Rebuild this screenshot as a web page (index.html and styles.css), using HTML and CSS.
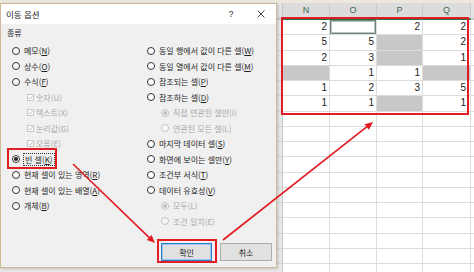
FILE: index.html
```html
<!DOCTYPE html>
<html lang="ko">
<head>
<meta charset="utf-8">
<title>이동 옵션</title>
<link rel="stylesheet" href="styles.css">
</head>
<body>
<div class="stage">
  <div class="sheet">
    <div class="topstrip"></div>
    <div class="hdr">
      <div class="rh"></div>
      <div class="ch">N</div><div class="ch">O</div><div class="ch w46">P</div><div class="ch wq">Q</div><div class="ch last"></div>
    </div>
    <div class="row"><div class="rh"></div><div class="c">2</div><div class="c active"></div><div class="c w46">2</div><div class="c wq">2</div><div class="c last"></div></div>
    <div class="row"><div class="rh"></div><div class="c">5</div><div class="c">5</div><div class="c w46 blank"></div><div class="c wq">2</div><div class="c last"></div></div>
    <div class="row"><div class="rh"></div><div class="c">2</div><div class="c">3</div><div class="c w46 blank"></div><div class="c wq">1</div><div class="c last"></div></div>
    <div class="row"><div class="rh"></div><div class="c blank"></div><div class="c">1</div><div class="c w46">1</div><div class="c wq blank"></div><div class="c last"></div></div>
    <div class="row"><div class="rh"></div><div class="c">1</div><div class="c">2</div><div class="c w46">3</div><div class="c wq">5</div><div class="c last"></div></div>
    <div class="row"><div class="rh"></div><div class="c">1</div><div class="c">1</div><div class="c w46 blank"></div><div class="c wq">1</div><div class="c last"></div></div>
    <div class="row"><div class="rh"></div><div class="c"></div><div class="c"></div><div class="c w46"></div><div class="c wq"></div><div class="c last"></div></div>
    <div class="row"><div class="rh"></div><div class="c"></div><div class="c"></div><div class="c w46"></div><div class="c wq"></div><div class="c last"></div></div>
    <div class="row"><div class="rh"></div><div class="c"></div><div class="c"></div><div class="c w46"></div><div class="c wq"></div><div class="c last"></div></div>
    <div class="row"><div class="rh"></div><div class="c"></div><div class="c"></div><div class="c w46"></div><div class="c wq"></div><div class="c last"></div></div>
    <div class="row"><div class="rh"></div><div class="c"></div><div class="c"></div><div class="c w46"></div><div class="c wq"></div><div class="c last"></div></div>
    <div class="row"><div class="rh"></div><div class="c"></div><div class="c"></div><div class="c w46"></div><div class="c wq"></div><div class="c last"></div></div>
    <div class="row"><div class="rh"></div><div class="c"></div><div class="c"></div><div class="c w46"></div><div class="c wq"></div><div class="c last"></div></div>
    <div class="row"><div class="rh"></div><div class="c"></div><div class="c"></div><div class="c w46"></div><div class="c wq"></div><div class="c last"></div></div>
    <div class="row"><div class="rh"></div><div class="c"></div><div class="c"></div><div class="c w46"></div><div class="c wq"></div><div class="c last"></div></div>
    <div class="row"><div class="rh"></div><div class="c"></div><div class="c"></div><div class="c w46"></div><div class="c wq"></div><div class="c last"></div></div>
    <div class="row"><div class="rh"></div><div class="c"></div><div class="c"></div><div class="c w46"></div><div class="c wq"></div><div class="c last"></div></div>
  </div>

  <div class="dialog">
    <div class="titlebar">
      <span class="title">이동 옵션</span>
      <span class="help">?</span>
      <svg class="close" width="8" height="8" viewBox="0 0 8 8"><path d="M0.5 0.5L7.5 7.5M7.5 0.5L0.5 7.5" stroke="#333" stroke-width="0.9" fill="none"/></svg>
    </div>
    <div class="body">
      <div class="group-label">종류</div>
      <div class="opts">
        <div class="col left">
          <div class="opt"><span class="radio"></span><span>메모(<u>N</u>)</span></div>
          <div class="opt"><span class="radio"></span><span>상수(<u>O</u>)</span></div>
          <div class="opt"><span class="radio"></span><span>수식(<u>F</u>)</span></div>
          <div class="opt sub dis"><span class="check"><svg width="5" height="5" viewBox="0 0 5 5"><path d="M0.4 2.6L1.9 4.1L4.6 0.8" stroke="#b8b8b8" stroke-width="0.9" fill="none"/></svg></span><span>숫자(U)</span></div>
          <div class="opt sub dis"><span class="check"><svg width="5" height="5" viewBox="0 0 5 5"><path d="M0.4 2.6L1.9 4.1L4.6 0.8" stroke="#b8b8b8" stroke-width="0.9" fill="none"/></svg></span><span>텍스트(X)</span></div>
          <div class="opt sub dis"><span class="check"><svg width="5" height="5" viewBox="0 0 5 5"><path d="M0.4 2.6L1.9 4.1L4.6 0.8" stroke="#b8b8b8" stroke-width="0.9" fill="none"/></svg></span><span>논리값(G)</span></div>
          <div class="opt sub dis"><span class="check"><svg width="5" height="5" viewBox="0 0 5 5"><path d="M0.4 2.6L1.9 4.1L4.6 0.8" stroke="#b8b8b8" stroke-width="0.9" fill="none"/></svg></span><span>오류(E)</span></div>
          <div class="opt"><span class="radio on"></span><span class="focus">빈 셀(<u>K</u>)</span></div>
          <div class="opt"><span class="radio"></span><span>현재 셀이 있는 영역(<u>R</u>)</span></div>
          <div class="opt"><span class="radio"></span><span>현재 셀이 있는 배열(<u>A</u>)</span></div>
          <div class="opt"><span class="radio"></span><span>개체(<u>B</u>)</span></div>
        </div>
        <div class="col right">
          <div class="opt"><span class="radio"></span><span>동일 행에서 값이 다른 셀(<u>W</u>)</span></div>
          <div class="opt"><span class="radio"></span><span>동일 열에서 값이 다른 셀(<u>M</u>)</span></div>
          <div class="opt"><span class="radio"></span><span>참조되는 셀(<u>P</u>)</span></div>
          <div class="opt"><span class="radio"></span><span>참조하는 셀(<u>D</u>)</span></div>
          <div class="opt sub dis"><span class="radio on"></span><span>직접 연관된 셀만(I)</span></div>
          <div class="opt sub dis"><span class="radio"></span><span>연관된 모든 셀(L)</span></div>
          <div class="opt"><span class="radio"></span><span>마지막 데이터 셀(<u>S</u>)</span></div>
          <div class="opt"><span class="radio"></span><span>화면에 보이는 셀만(<u>Y</u>)</span></div>
          <div class="opt"><span class="radio"></span><span>조건부 서식(<u>T</u>)</span></div>
          <div class="opt"><span class="radio"></span><span>데이터 유효성(<u>V</u>)</span></div>
          <div class="opt sub dis"><span class="radio on"></span><span>모두(L)</span></div>
          <div class="opt sub dis"><span class="radio"></span><span>조건 일치(E)</span></div>
        </div>
      </div>
      <div class="buttons">
        <button class="btn default">확인</button>
        <button class="btn cancel">취소</button>
      </div>
    </div>
  </div>

  <div class="mark mark-blank"></div>
  <div class="mark mark-ok"></div>
  <div class="mark mark-range"></div>

  <svg class="arrows" width="474" height="272" viewBox="0 0 474 272">
    <line x1="73" y1="164" x2="149.5" y2="237.8" stroke="#e31b23" stroke-width="1.6"/>
    <polygon points="155,243 146.8,240 151.6,235" fill="#e31b23"/>
    <line x1="223" y1="240" x2="366.7" y2="126.9" stroke="#e31b23" stroke-width="1.6"/>
    <polygon points="373,122 368.9,129.65 364.5,124.15" fill="#e31b23"/>
  </svg>
</div>
</body>
</html>
```

FILE: styles.css
```css
* { box-sizing: border-box; margin: 0; padding: 0; }
html, body { width: 474px; height: 272px; overflow: hidden; background: #fff; }
body { font-family: "Noto Sans CJK KR", "Noto Sans", sans-serif; }

.stage { position: relative; width: 474px; height: 272px; overflow: hidden; }

/* spreadsheet */
.sheet { display: flex; flex-direction: column; width: 474px; height: 272px; background: #fff; }
.topstrip { flex: none; height: 3px; background: #ece8e0; }
.hdr { flex: none; display: flex; height: 17px; background: #dcdcdc; }
.hdr .rh { border-bottom: 2px solid #c8c8c8; background: #e4e4e4; }
.ch {
  flex: none; width: 47px; height: 17px;
  border-right: 1px solid #c9c9c9; border-bottom: 2px solid #217346;
  font: 9px/15px "Liberation Sans", Arial, sans-serif; color: #3b6a50;
  text-align: center;
}
.ch.w46 { width: 46px; }
.ch.wq { width: 48px; }
.ch.last { flex: 1; border-right: none; border-bottom-color: #c8c8c8; background: #e4e4e4; }

.row { flex: none; display: flex; height: 15.25px; }
.rh { flex: none; width: 283px; background: #e9e9e9; border-right: 1px solid #c6c6c6; border-bottom: 1px solid #d8d8d8; }
.c {
  flex: none; width: 47px;
  border-right: 1px solid #dcdcdc; border-bottom: 1px solid #dcdcdc;
  font: 10px/14px "Liberation Sans", Arial, sans-serif; color: #222;
  text-align: right; padding-right: 2px;
}
.c.w46 { width: 46px; }
.c.wq { width: 48px; padding-right: 4px; }
.c.last { flex: 1; border-right: none; }
.c.blank { background: #c8c8c8; }
.c.active { box-shadow: inset 0 0 0 1px #6f8579, inset 0 0 0 2px #b9c5be; }

/* dialog */
.dialog {
  position: absolute; left: 0; top: 3px; width: 277px; height: 265px;
  display: flex; flex-direction: column;
  background: #f0f0f0; border: 1px solid #cdb994;
  box-shadow: 1px 1px 3px rgba(0, 0, 0, 0.18);
}
.titlebar { flex: none; height: 20px; display: flex; align-items: center; padding-left: 5px; background: #fff; }
.title { flex: 1; font-size: 8.5px; color: #222; }
.help { width: 8px; margin-right: 22px; text-align: center; font: 9px "Liberation Sans", Arial, sans-serif; color: #333; }
.close { flex: none; margin-right: 11px; }

.body { flex: 1; display: flex; flex-direction: column; padding: 2px 4px 6px 11px; }
.group-label { height: 14px; line-height: 14px; font-size: 8px; color: #222; margin-left: -5px; margin-bottom: 3px; }
.opts { display: flex; }
.col.left { width: 135px; flex: none; }
.col.right { flex: 1; }

.opt { display: flex; align-items: center; height: 15.5px; font-size: 8px; color: #1e1e1e; white-space: nowrap; }
.opt u { text-decoration: underline; text-underline-offset: 1px; }
.left .opt.sub { padding-left: 15px; }
.right .opt.sub { padding-left: 14px; }
.opt.dis { color: #a9a9a9; }

.radio {
  flex: none; position: relative; width: 8px; height: 8px; margin-right: 4px;
  border: 1px solid #333; border-radius: 50%; background: #fff;
}
.radio.on::after {
  content: ""; position: absolute; left: 1px; top: 1px; width: 4px; height: 4px;
  border-radius: 50%; background: #222;
}
.dis .radio { border-color: #c2c2c2; background: #f7f7f7; }
.dis .radio.on::after { background: #bdbdbd; }

.check {
  flex: none; display: flex; align-items: center; justify-content: center;
  width: 7px; height: 7px; margin-right: 2px;
  border: 1px solid #c6c6c6; background: #fff;
}

.focus { outline: 1px dotted #333; outline-offset: 0; padding: 0 1px; }

.buttons { margin-top: auto; display: flex; justify-content: flex-end; gap: 8px; }
.btn {
  width: 51px; height: 18px;
  font-family: "Noto Sans CJK KR", "Noto Sans", sans-serif; font-size: 8px; color: #222;
  background: #e1e1e1; border: 1px solid #adadad;
}
.btn.default { border-color: #2f7fcf; box-shadow: inset 0 0 0 1px #9cc3ea; }
.btn.cancel { width: 52px; }

/* annotations */
.mark { position: absolute; border: 2px solid #e31b23; }
.mark-blank { left: 7px; top: 148px; width: 50px; height: 21px; }
.mark-ok { left: 157px; top: 239px; width: 60px; height: 24px; }
.mark-range { left: 281px; top: 17px; width: 188px; height: 98px; }

.arrows { position: absolute; left: 0; top: 0; pointer-events: none; }
```
